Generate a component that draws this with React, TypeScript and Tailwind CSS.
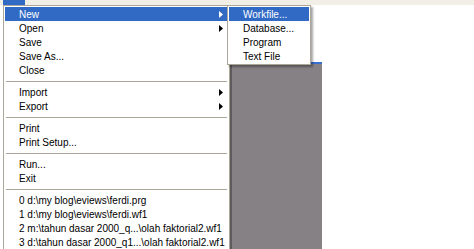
import React from 'react';

type Item = { label?: string; arrow?: boolean; active?: boolean; sep?: boolean };

const fileItems: Item[] = [
  { label: 'New', arrow: true, active: true },
  { label: 'Open', arrow: true },
  { label: 'Save' },
  { label: 'Save As...' },
  { label: 'Close' },
  { sep: true },
  { label: 'Import', arrow: true },
  { label: 'Export', arrow: true },
  { sep: true },
  { label: 'Print' },
  { label: 'Print Setup...' },
  { sep: true },
  { label: 'Run...' },
  { label: 'Exit' },
  { sep: true },
  { label: '0 d:\\my blog\\eviews\\ferdi.prg' },
  { label: '1 d:\\my blog\\eviews\\ferdi.wf1' },
  { label: '2 m:\\tahun dasar 2000_q...\\olah faktorial2.wf1' },
  { label: '3 d:\\tahun dasar 2000_q1...\\olah faktorial2.wf1' },
];

const newItems: Item[] = [
  { label: 'Workfile...', active: true },
  { label: 'Database...' },
  { label: 'Program' },
  { label: 'Text File' },
];

function Arrow({ white }: { white?: boolean }) {
  return (
    <svg width="4" height="7" viewBox="0 0 4 7" className="shrink-0">
      <path d="M0 0 L4 3.5 L0 7 Z" fill={white ? '#ffffff' : '#000000'} />
    </svg>
  );
}

function MenuRow({ item }: { item: Item }) {
  if (item.sep) {
    return (
      <div className="h-[8px] flex items-center px-[1px]">
        <div className="h-px w-full bg-[#aca899]" />
      </div>
    );
  }
  return (
    <div
      className={`h-[14px] flex items-center justify-between pl-[14px] pr-[5px] ${
        item.active ? 'bg-[#316ac5] text-white' : 'text-black'
      }`}
    >
      <span className="whitespace-nowrap leading-none pt-px">{item.label}</span>
      {item.arrow && <Arrow white={item.active} />}
    </div>
  );
}

export default function App() {
  return (
    <div
      className="relative w-[474px] h-[249px] bg-white overflow-hidden text-[10px]"
      style={{ fontFamily: '"Liberation Sans", Arial, sans-serif' }}
    >
      {/* menu bar remnant */}
      <div className="h-[5px] bg-[#f1efe6] flex">
        <div className="ml-[3px] w-[22px] h-full bg-[#316ac5]" />
      </div>

      {/* window behind the menus */}
      <div className="absolute left-[230px] top-[62px] w-[92px] h-[190px] bg-[#858185] border-l-2 border-[#5e5b5e] border-t-2 border-t-[#3a6fd0]" />

      {/* File menu */}
      <div className="absolute left-[3px] top-[5px] w-[227px] h-[250px] bg-white border border-[#aca899] p-[1px]">
        {fileItems.map((it, i) => (
          <MenuRow key={i} item={it} />
        ))}
      </div>

      {/* New submenu */}
      <div className="absolute left-[227px] top-[5px] w-[84px] bg-white border border-[#aca899] p-[1px] shadow-[2px_2px_2px_rgba(0,0,0,0.35)]">
        {newItems.map((it, i) => (
          <MenuRow key={i} item={it} />
        ))}
      </div>
    </div>
  );
}
